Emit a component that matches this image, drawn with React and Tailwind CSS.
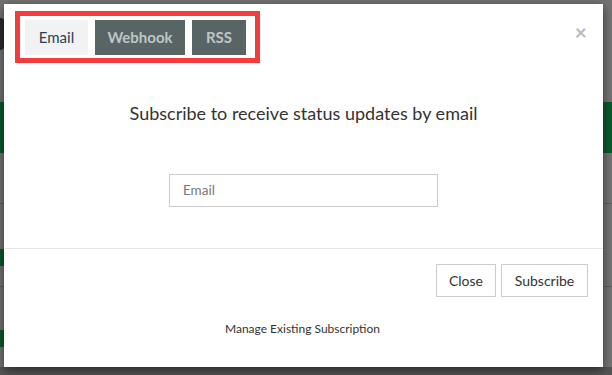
import React from "react";

export default function App() {
  return (
    <div className="relative w-[612px] h-[375px] overflow-hidden bg-[#747474]" style={{ fontFamily: "Lato, 'Noto Sans', sans-serif" }}>
      {/* Background page (dimmed) */}
      <div className="flex flex-col w-full h-full">
        <div className="h-[102px] relative">
          <div className="absolute left-[-22px] top-[17px] w-[34px] h-[34px] rounded-full bg-[#2b2b2b]" />
        </div>
        <div className="h-[51px] bg-[#0b5a2e]" />
        <div className="h-[51px] border-b border-[#5e5e5e]" />
        <div className="h-[45px]" />
        <div className="h-[17px] w-[20px] bg-[#0b5a2e]" />
        <div className="h-[21px] border-b border-[#5e5e5e]" />
        <div className="h-[43px]" />
        <div className="h-[17px] w-[20px] bg-[#0b5a2e]" />
        <div className="flex-1" />
        <div className="h-[8px] bg-[#555]" />
      </div>

      {/* Modal */}
      <div className="absolute left-[4px] top-[4px] w-[599px] h-[363px] bg-white shadow-[0_3px_10px_rgba(0,0,0,0.55)] flex flex-col">
        <div className="relative h-[244px] flex flex-col">
          <div className="pl-[11px] pt-[7px] flex">
            <div className="border-[5px] border-[#f53b3b] pl-[5px] pr-[9px] pt-[4px] pb-[3px] flex gap-[7px]">
              <div className="w-[63px] h-[35px] bg-[#f0f2f4] text-[#2c3e50] text-[15px] flex items-center justify-center">Email</div>
              <div className="w-[90px] h-[35px] bg-[#596465] text-[#bcc6c6] text-[15px] font-bold flex items-center justify-center">Webhook</div>
              <div className="w-[54px] h-[35px] bg-[#596465] text-[#bcc6c6] text-[15px] font-bold flex items-center justify-center">RSS</div>
            </div>
          </div>
          <div className="absolute right-[16px] top-[16px] text-[#bbbbbb] text-[21px] leading-[24px] font-bold">×</div>
          <div className="mt-[37px] text-center text-[#333333] text-[18px] leading-[26px]">Subscribe to receive status updates by email</div>
          <div className="mt-[48px] flex justify-center">
            <div className="w-[269px] h-[33px] border border-[#cccccc] flex items-center pl-[13px] text-[13.5px] text-[#777777]">Email</div>
          </div>
        </div>
        <div className="border-t border-[#e5e5e5]" />
        <div className="flex justify-end gap-[5px] pr-[15px] pt-[15px]">
          <div className="w-[60px] h-[33px] border border-[#cccccc] flex items-center justify-center text-[14px] text-[#333333]">Close</div>
          <div className="w-[87px] h-[33px] border border-[#cccccc] flex items-center justify-center text-[14px] text-[#333333]">Subscribe</div>
        </div>
        <div className="mt-[23px] text-center text-[12px] text-[#333333] pr-[2px]">Manage Existing Subscription</div>
      </div>
    </div>
  );
}
